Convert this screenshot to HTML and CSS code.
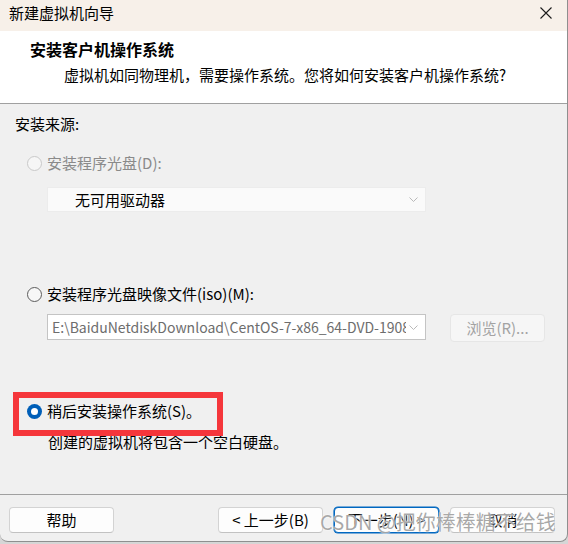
FILE: index.html
```html
<!DOCTYPE html>
<html lang="zh-CN">
<head>
<meta charset="utf-8">
<title>新建虚拟机向导</title>
<link rel="stylesheet" href="styles.css">
</head>
<body>
<div class="window">
  <div class="titlebar">
    <span class="title-text">新建虚拟机向导</span>
    <svg class="close-icon" width="12" height="12" viewBox="0 0 12 12" aria-hidden="true">
      <path d="M0.5 0.5 L11.5 11.5 M11.5 0.5 L0.5 11.5" stroke="#1b1b1b" stroke-width="1.1" fill="none"/>
    </svg>
  </div>
  <div class="header">
    <div class="header-title">安装客户机操作系统</div>
    <div class="header-sub">虚拟机如同物理机，需要操作系统。您将如何安装客户机操作系统?</div>
  </div>
  <div class="content">
    <div class="group-label">安装来源:</div>

    <div class="option option-first is-disabled">
      <span class="radio radio-disabled"></span>
      <span class="option-label">安装程序光盘(D):</span>
    </div>
    <div class="combo combo-disabled">
      <span class="combo-text combo-text-drive">无可用驱动器</span>
      <svg class="chevron" width="9" height="5" viewBox="0 0 9 5" aria-hidden="true"><path d="M0.5 0.5 L4.5 4.5 L8.5 0.5" stroke="#b9b9b9" fill="none"/></svg>
    </div>

    <div class="option option-second">
      <span class="radio radio-normal"></span>
      <span class="option-label">安装程序光盘映像文件(iso)(M):</span>
    </div>
    <div class="iso-row">
      <div class="combo combo-iso">
        <span class="combo-text combo-text-path">E:\BaiduNetdiskDownload\CentOS-7-x86_64-DVD-1908.iso</span>
        <svg class="chevron" width="9" height="5" viewBox="0 0 9 5" aria-hidden="true"><path d="M0.5 0.5 L4.5 4.5 L8.5 0.5" stroke="#b9b9b9" fill="none"/></svg>
      </div>
      <div class="btn btn-browse">浏览(R)...</div>
    </div>

    <div class="option option-third">
      <span class="radio radio-checked"></span>
      <span class="option-label">稍后安装操作系统(S)。</span>
    </div>
    <div class="description">创建的虚拟机将包含一个空白硬盘。</div>
  </div>
  <div class="footer">
    <div class="btn btn-footer">帮助</div>
    <div class="footer-right">
      <div class="btn btn-footer">&lt; 上一步(B)</div>
      <div class="btn btn-footer btn-focused">下一步(N) &gt;</div>
      <div class="btn btn-footer">取消</div>
    </div>
  </div>
  <div class="highlight-box"></div>
  <div class="watermark">CSDN @把你棒棒糖不给钱</div>
</div>
</body>
</html>
```
FILE: styles.css
```css
* {
  box-sizing: border-box;
}

html,
body {
  margin: 0;
  padding: 0;
  background: #d6d6d6;
}

body {
  width: 568px;
  height: 544px;
  overflow: hidden;
  font-family: "Noto Sans CJK SC", "Noto Sans", sans-serif;
  font-size: 15px;
  color: #000;
}

.window {
  position: relative;
  width: 568px;
  height: 542px;
  background: #f0f0f0;
  border-right: 1px solid #8f8f8f;
  border-bottom: 1px solid #8f8f8f;
  border-radius: 0 0 8px 8px;
  overflow: hidden;
}

.titlebar {
  height: 31px;
  background: #f7f0e9;
  display: flex;
  align-items: flex-start;
  justify-content: space-between;
  padding: 4px 15px 0 9px;
}

.title-text {
  line-height: 18px;
  font-size: 15px;
}

.close-icon {
  margin-top: 3px;
}

.header {
  height: 73px;
  background: #fff;
  border-bottom: 1px solid #a0a0a0;
  padding: 7px 0 0 30px;
}

.header-title {
  font-size: 16px;
  font-weight: bold;
  line-height: 22px;
}

.header-sub {
  margin-top: 5px;
  padding-left: 34px;
  line-height: 20px;
}

.content {
  height: 390px;
  padding: 10px 0 0 15px;
}

.group-label {
  line-height: 20px;
}

.option {
  display: flex;
  align-items: center;
  height: 20px;
  margin-left: 12px;
}

.option-first {
  margin-top: 19px;
}

.option-second {
  margin-top: 72px;
}

.option-third {
  margin-top: 59px;
}

.option-label {
  margin-left: 5px;
  line-height: 20px;
}

.is-disabled .option-label {
  color: #8a8a8a;
}

.radio {
  width: 15px;
  height: 15px;
  border-radius: 50%;
  flex: none;
}

.radio-disabled {
  border: 1px solid #c9c9c9;
  background: #f6f6f6;
}

.radio-normal {
  border: 1px solid #5c5c5c;
  background: #f7f7f7;
}

.radio-checked {
  background: #005fb8;
  position: relative;
}

.radio-checked::after {
  content: "";
  position: absolute;
  left: 4px;
  top: 4px;
  width: 7px;
  height: 7px;
  border-radius: 50%;
  background: #fff;
}

.combo {
  display: flex;
  align-items: center;
  justify-content: space-between;
  height: 25px;
  margin-left: 32px;
  width: 379px;
  padding: 0 7px 0 4px;
}

.combo-disabled {
  margin-top: 14px;
  background: #fafafa;
  border: 1px solid #ececec;
}

.combo-text {
  line-height: 20px;
  white-space: nowrap;
  overflow: hidden;
}

.combo-text-drive {
  padding-left: 23px;
}

.combo-text-path {
  color: #6d6d6d;
  width: 354px;
  font-size: 14px;
}

.chevron {
  flex: none;
}

.iso-row {
  display: flex;
  align-items: flex-start;
  margin-top: 10px;
  height: 28px;
}

.combo-iso {
  height: 26px;
  background: #fff;
  border: 1px solid #c4c4c4;
}

.btn {
  display: flex;
  align-items: center;
  justify-content: center;
  border-radius: 4px;
  line-height: 20px;
  white-space: nowrap;
}

.btn-browse {
  margin-left: 24px;
  width: 95px;
  height: 28px;
  background: #f6f6f6;
  border: 1px solid #e6e6e6;
  color: #a3a3a3;
}

.description {
  margin-top: 11px;
  margin-left: 33px;
  line-height: 20px;
}

.footer {
  border-top: 1px solid #a0a0a0;
  display: flex;
  justify-content: space-between;
  padding: 12px 12px 0 9px;
}

.footer-right {
  display: flex;
  gap: 11px;
}

.btn-footer {
  width: 105px;
  height: 26px;
  background: #fdfdfd;
  border: 1px solid #d3d3d3;
  border-bottom-color: #c2c2c2;
}

.btn-focused {
  border: 1px solid #0067c0;
  box-shadow: 0 0 0 0.6px #0067c0;
}

.highlight-box {
  position: absolute;
  left: 13px;
  top: 392px;
  width: 210px;
  height: 44px;
  border: 6px solid #f5363b;
}

.watermark {
  position: absolute;
  left: 320px;
  top: 509px;
  font-size: 20px;
  line-height: 26px;
  color: rgba(110, 110, 110, 0.6);
  text-shadow: 0 0 1px #fff, 0 0 2px rgba(255, 255, 255, 0.9);
  white-space: nowrap;
  pointer-events: none;
}
```
